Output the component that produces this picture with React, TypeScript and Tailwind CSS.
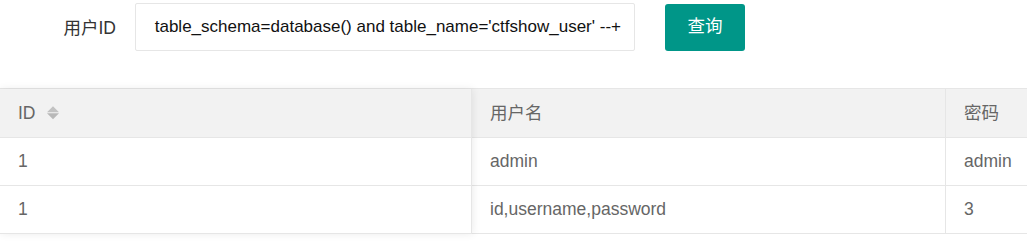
import React from "react";

const font = "font-['Liberation_Sans','Noto_Sans_CJK_SC',Arial,sans-serif]";

function SortIcon() {
  return (
    <svg width="12" height="14" viewBox="0 0 12 14" className="ml-[11px]">
      <polygon points="0,6.3 12,6.3 6,0.3" fill="#c2c2c2" />
      <polygon points="0,7.3 12,7.3 6,13.3" fill="#b8b8b8" />
    </svg>
  );
}

type Col = { title: string; w: string; sort?: boolean; cells: string[]; first?: boolean };

const cols: Col[] = [
  { title: "ID", w: "w-[472px]", sort: true, cells: ["1", "1"], first: true },
  { title: "用户名", w: "w-[474px]", cells: ["admin", "id,username,password"] },
  { title: "密码", w: "w-[200px]", cells: ["admin", "3"] },
];

export default function App() {
  return (
    <div className={`w-[1027px] h-[250px] overflow-hidden bg-white ${font}`}>
      <div className="flex items-center pt-[3px]">
        <label className="w-[135px] pr-[19px] pt-[3px] text-right text-[17.5px] text-[#333] leading-none">
          用户ID
        </label>
        <div className="w-[500px] h-[48px] border border-[#e6e6e6] rounded-[2px] flex items-center overflow-hidden pl-[14px]">
          <span className="whitespace-pre text-[17px] text-[#111]">
            {" table_schema=database() and table_name='ctfshow_user' --+"}
          </span>
        </div>
        <button className="ml-[30px] w-[80px] h-[47px] bg-[#009688] text-white rounded-[3px] text-[17.5px] leading-none">
          查询
        </button>
      </div>

      <div className="mt-[37px] flex border-t border-[#e6e6e6] w-[1146px]">
        {cols.map((c) => (
          <div
            key={c.title}
            className={`${c.w} shrink-0 flex flex-col ${
              c.first ? "relative z-10 shadow-[1px_0_8px_rgba(0,0,0,0.08)]" : ""
            }`}
          >
            <div className="h-[49px] bg-[#f2f2f2] border-b border-r border-[#e6e6e6] flex items-center pl-[18px] text-[17.5px] text-[#666]">
              <span>{c.title}</span>
              {c.sort && <SortIcon />}
            </div>
            {c.cells.map((v, i) => (
              <div
                key={i}
                className="h-[48px] bg-white border-b border-r border-[#e6e6e6] flex items-center pl-[18px] text-[17.5px] text-[#666] whitespace-nowrap"
              >
                {v}
              </div>
            ))}
          </div>
        ))}
      </div>
    </div>
  );
}
